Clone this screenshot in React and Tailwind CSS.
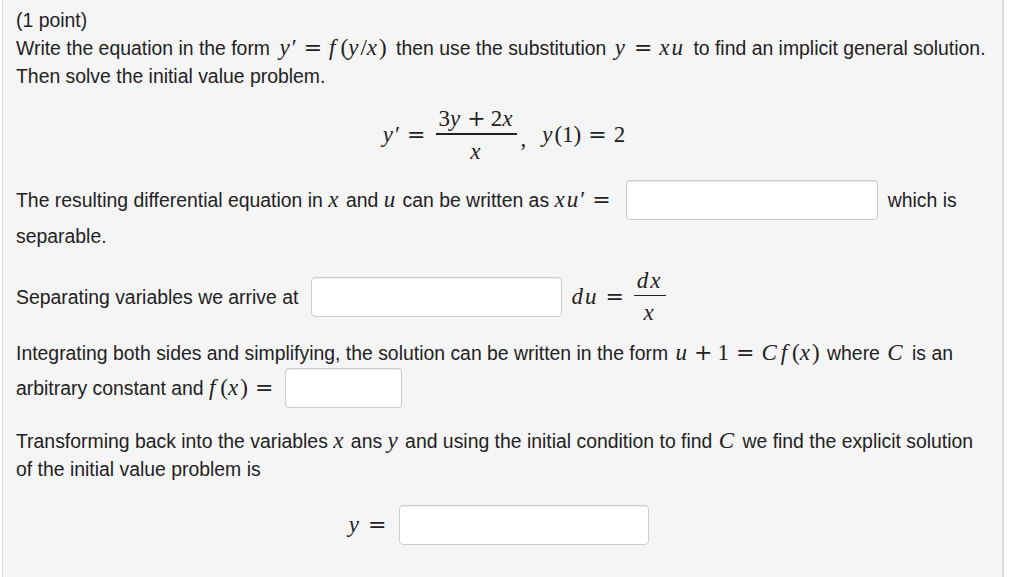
import React from 'react';

const mathFont = "font-['Liberation_Serif','Times_New_Roman',serif] text-[23px]";

function M({ children, className = '' }) {
  return <span className={`${mathFont} whitespace-nowrap ${className}`}>{children}</span>;
}

function V({ children, className = '' }) {
  return <span className={`italic tracking-[2px] ${className}`}>{children}</span>;
}

function Eq() {
  return <span className="mx-[7px] font-['DejaVu_Serif',serif] text-[22px]">=</span>;
}

function Plus() {
  return <span className="mx-[5px] font-['DejaVu_Serif',serif] text-[22px]">+</span>;
}

function F() {
  return <V className="mr-[3px]">f</V>;
}

function Frac({ num, den, className = 'mx-[3px]' }) {
  return (
    <span className={`inline-flex flex-col items-center ${className}`}>
      <span className="px-[3px] leading-[22px]">{num}</span>
      <span className="mt-[3px] h-[1.5px] w-full bg-[#222]" />
      <span className="px-[3px] pt-[6px] leading-[22px]">{den}</span>
    </span>
  );
}

function AnswerBox({ className = '' }) {
  return (
    <span
      className={`inline-block h-[40px] shrink-0 rounded-[4px] border border-[#cccccc] bg-white shadow-[inset_0_1px_1px_rgba(0,0,0,0.075)] ${className}`}
    />
  );
}

export default function App() {
  return (
    <div className="min-h-[577px] bg-white">
      <div className="ml-[2px] min-h-[577px] w-[1002px] border-l border-r-2 border-[#dcdcdc] bg-[#f5f5f5] pl-[13px] pr-[10px] pt-[6px] font-['Liberation_Sans',Arial,sans-serif] text-[19.4px] leading-[28px] text-[#222]">
        <div>(1 point)</div>
        <div className="whitespace-nowrap">
          Write the equation in the form{' '}
          <M className="mx-[4px]">
            <V>y</V>′<Eq />
            <F />(<V>y</V>/<V>x</V>)
          </M>{' '}
          then use the substitution{' '}
          <M className="mx-[3px]">
            <V>y</V>
            <Eq />
            <V>xu</V>
          </M>{' '}
          to find an implicit general solution.
        </div>
        <div>Then solve the initial value problem.</div>

        {/* display equation */}
        <div className="flex h-[88px] items-start justify-center pt-[18px]">
          <div className={`flex items-center ${mathFont}`}>
            <span>
              <V>y</V>′
            </span>
            <Eq />
            <Frac
              num={
                <>
                  3<V>y</V>
                  <Plus />2<V>x</V>
                </>
              }
              den={<V>x</V>}
            />
            <span className="mt-[8px]">,</span>
            <span className="ml-[16px]">
              <V>y</V>(1)
            </span>
            <Eq />
            <span>2</span>
          </div>
        </div>

        <div className="flex h-[44px] items-center whitespace-nowrap">
          <span>
            The resulting differential equation in{' '}
            <M>
              <V>x</V>
            </M>{' '}
            and{' '}
            <M>
              <V>u</V>
            </M>{' '}
            can be written as{' '}
            <M>
              <V>xu</V>′<Eq />
            </M>
          </span>
          <AnswerBox className="ml-[8px] w-[252px]" />
          <span className="ml-[10px]">which is</span>
        </div>
        <div>separable.</div>

        <div className="mt-[18px] flex h-[58px] items-center whitespace-nowrap">
          <span>Separating variables we arrive at</span>
          <AnswerBox className="ml-[13px] w-[251px]" />
          <span className={`ml-[9px] flex items-center ${mathFont}`}>
            <V>du</V>
            <Eq />
            <Frac num={<V>dx</V>} den={<V>x</V>} />
          </span>
        </div>

        <div className="mt-[13px] whitespace-nowrap">
          Integrating both sides and simplifying, the solution can be written in the form{' '}
          <M className="mx-[2px]">
            <V>u</V>
            <Plus />1<Eq />
            <V className="mr-[2px]">C</V>
            <F />(<V>x</V>)
          </M>{' '}
          where{' '}
          <M className="mx-[2px]">
            <V>C</V>
          </M>{' '}
          is an
        </div>
        <div className="flex h-[42px] items-center whitespace-nowrap">
          <span>
            arbitrary constant and{' '}
            <M>
              <F />(<V>x</V>)
              <Eq />
            </M>
          </span>
          <AnswerBox className="ml-[5px] w-[117px]" />
        </div>

        <div className="mt-[18px] whitespace-nowrap">
          Transforming back into the variables{' '}
          <M>
            <V>x</V>
          </M>{' '}
          ans{' '}
          <M>
            <V>y</V>
          </M>{' '}
          and using the initial condition to find{' '}
          <M className="mx-[1px]">
            <V>C</V>
          </M>{' '}
          we find the explicit solution
        </div>
        <div>of the initial value problem is</div>

        <div className="mt-[20px] flex h-[43px] items-center justify-center pr-[10px]">
          <M>
            <V>y</V>
            <Eq />
          </M>
          <AnswerBox className="ml-[6px] w-[250px]" />
        </div>
      </div>
    </div>
  );
}
